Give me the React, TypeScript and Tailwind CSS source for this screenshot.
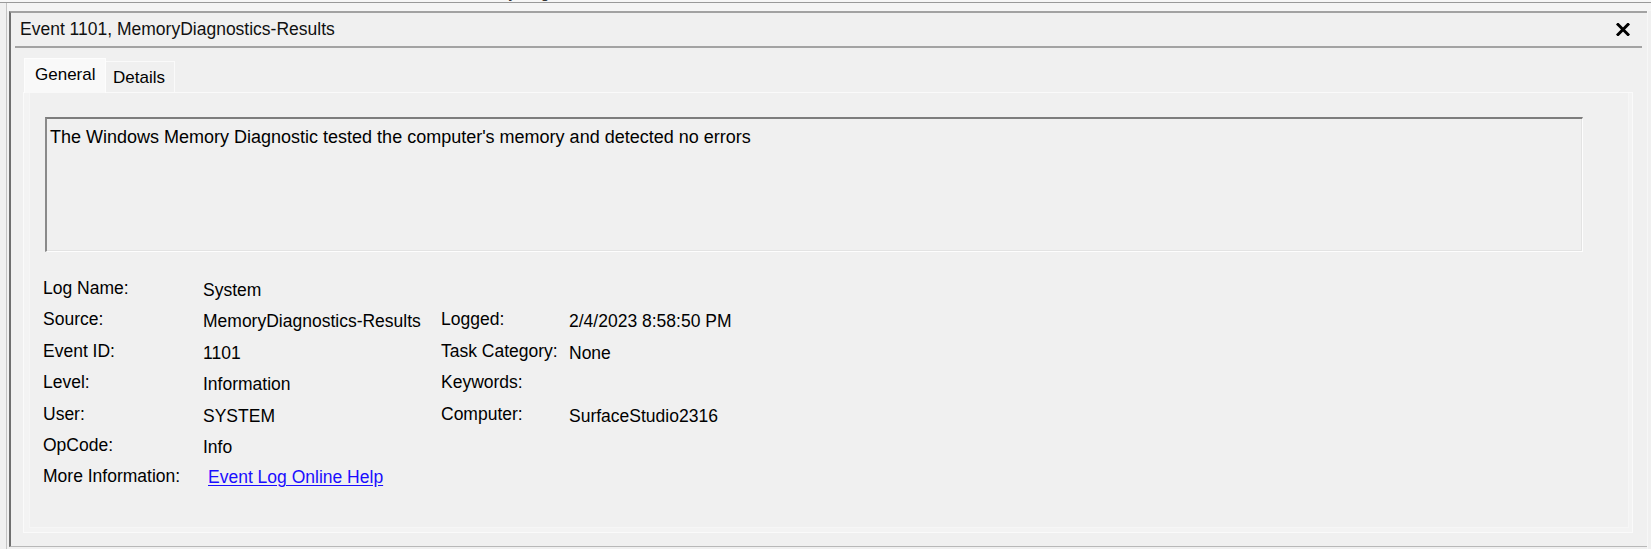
import React from "react";

const rows: [string, string, string?, string?][] = [
  ["Log Name:", "System"],
  ["Source:", "MemoryDiagnostics-Results", "Logged:", "2/4/2023 8:58:50 PM"],
  ["Event ID:", "1101", "Task Category:", "None"],
  ["Level:", "Information", "Keywords:", ""],
  ["User:", "SYSTEM", "Computer:", "SurfaceStudio2316"],
  ["OpCode:", "Info"],
];

function CloseIcon() {
  return (
    <svg width="14" height="13" viewBox="0 0 14 13">
      <path d="M2 1.5 L12 11.5 M12 1.5 L2 11.5" stroke="#000" strokeWidth="3" strokeLinecap="square" />
    </svg>
  );
}

export default function App() {
  return (
    <div className="w-[1651px] h-[549px] bg-[#f0f0f0] overflow-hidden flex flex-col font-['Liberation_Sans',Arial,sans-serif] text-[17.5px] text-black">
      {/* clipped row from the list above */}
      <div className="h-[2px] overflow-hidden bg-[#f7f7f7]">
        <div className="mt-[-17px] whitespace-nowrap pl-[60px] leading-[19px] text-[16px] text-[#333]">
          <span className="mr-[80px]">Information</span>
          <span className="mr-[90px]">2/4/2023 8:58:50 PM</span>
          <span className="mr-[120px]">MemoryDiagnostics-Results</span>
          <span className="mr-[60px]">1101</span>
          <span>None</span>
        </div>
      </div>
      <div className="h-[1px] bg-[#9a9a9a]" />
      <div className="h-[8px] bg-[#f5f5f5] border-l border-[#c4c4c4] ml-[6px]" />

      <div className="flex flex-1 min-h-0">
        <div className="w-[9px] flex">
          <div className="w-[6px]" />
          <div className="w-[1px] bg-[#c4c4c4]" />
        </div>

        <div className="flex-1 flex flex-col border-l-2 border-t-2 border-b border-l-[#6f6f6f] border-t-[#a2a2a2] border-b-[#b8b8b8] mb-[2px]">
          {/* title */}
          <div className="h-[33px] flex items-center justify-between pl-[9px] pr-[17px]">
            <span className="text-[17.5px] text-[#111]">Event 1101, MemoryDiagnostics-Results</span>
            <CloseIcon />
          </div>
          <div className="h-[2px] bg-[#a3a3a3] ml-[4px] mr-[5px]" />

          {/* tabs */}
          <div className="flex items-end pl-[13px] pt-[10px] text-[17px]">
            <div className="w-[82px] h-[35px] -mb-[1px] z-10 bg-[#f9f9f9] border border-b-0 border-[#fdfdfd] flex items-center pl-[10px] pb-[2px]">
              General
            </div>
            <div className="w-[69px] h-[31px] bg-[#f0f0f0] border border-b-0 border-l-0 border-[#fafafa] flex items-center pl-[7px] pt-[1px]">
              Details
            </div>
          </div>

          {/* tab page */}
          <div className="ml-[12px] mr-[14px] mb-[13px] flex-1 border border-[#fafafa] bg-[#f3f3f3] pl-[5px] pr-[3px] pb-[4px] flex">
            <div className="flex-1 bg-[#f0f0f0] border border-t-0 border-[#f6f6f6] pl-[15px] pr-[45px] pt-[24px] flex flex-col">
              <div className="h-[135px] border-t-2 border-l-2 border-t-[#7d7d7d] border-l-[#8a8a8a] border-b border-r border-b-[#fdfdfd] border-r-[#fdfdfd] flex">
                <div className="flex-1 border-b border-r border-[#e3e3e3] px-[3px] pt-[7px] leading-[22px] text-[18px]">
                  The Windows Memory Diagnostic tested the computer's memory and detected no errors
                </div>
              </div>

              <div className="mt-[21px] -ml-[2px] grid grid-cols-[160px_238px_128px_1fr] auto-rows-[31.4px] leading-[31.4px]">
                {rows.map(([l1, v1, l2, v2]) => (
                  <React.Fragment key={l1}>
                    <div>{l1}</div>
                    <div className="pt-[2px] whitespace-nowrap">{v1}</div>
                    <div className="whitespace-nowrap">{l2 ?? ""}</div>
                    <div className="pt-[2px]">{v2 ?? ""}</div>
                  </React.Fragment>
                ))}
                <div className="whitespace-nowrap">More Information:</div>
                <div className="col-span-3 pt-[1px] pl-[5px]">
                  <a href="#" className="text-[#1a0dff] underline underline-offset-[2px]">
                    Event Log Online Help
                  </a>
                </div>
              </div>
            </div>
          </div>
        </div>
        <div className="w-[4px] flex">
          <div className="w-[1px] bg-[#f7f7f7]" />
        </div>
      </div>
    </div>
  );
}
